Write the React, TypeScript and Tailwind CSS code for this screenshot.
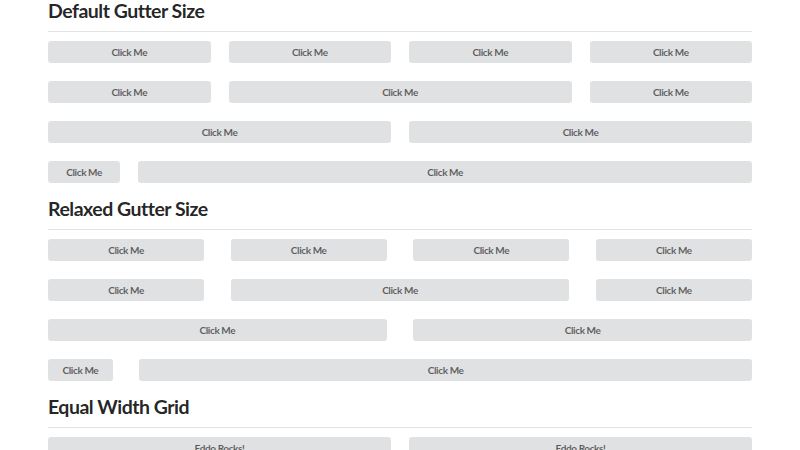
import React from "react";

type Row = number[];

// each number is a span out of 16 columns
const rows: Row[] = [
  [4, 4, 4, 4],
  [4, 8, 4],
  [8, 8],
  [2, 14],
];

const spanClass: Record<number, string> = {
  2: "col-span-2",
  4: "col-span-4",
  8: "col-span-8",
  14: "col-span-14",
};

function Btn({ label }: { label: string }) {
  return (
    <button className="block h-[22px] w-full rounded-[3px] bg-[#e0e1e2] text-[10px] leading-[22px] font-bold tracking-[-0.4px] text-[rgba(0,0,0,0.6)]">
      {label}
    </button>
  );
}

function Heading({ children }: { children: React.ReactNode }) {
  return (
    <div className="border-b border-[#e3e3e3] pb-[8px]">
      <h2 className="-mt-px text-[19.5px] leading-[24px] font-bold tracking-[-0.5px] text-[rgba(0,0,0,0.87)]">
        {children}
      </h2>
    </div>
  );
}

function GutterSection({ title, gap }: { title: string; gap: "default" | "relaxed" }) {
  return (
    <section className="h-[199px]">
      <Heading>{title}</Heading>
      <div
        className={
          gap === "default"
            ? "mt-[9px] grid grid-cols-16 gap-x-[18px] gap-y-[18px]"
            : "mt-[9px] grid grid-cols-16 gap-x-[26.5px] gap-y-[18px]"
        }
      >
        {rows.map((row, i) =>
          row.map((span, j) => (
            <div key={`${i}-${j}`} className={spanClass[span]}>
              <Btn label="Click Me" />
            </div>
          ))
        )}
      </div>
    </section>
  );
}

export default function App() {
  return (
    <div className="h-[450px] w-[800px] overflow-hidden bg-white font-['Lato',sans-serif]">
      <div className="mx-auto w-[704px]">
        <GutterSection title="Default Gutter Size" gap="default" />
        <GutterSection title="Relaxed Gutter Size" gap="relaxed" />
        <section>
          <Heading>Equal Width Grid</Heading>
          <div className="mt-[9px] grid grid-cols-2 gap-x-[18px] gap-y-[18px]">
            <Btn label="Eddo Rocks!" />
            <Btn label="Eddo Rocks!" />
          </div>
        </section>
      </div>
    </div>
  );
}
